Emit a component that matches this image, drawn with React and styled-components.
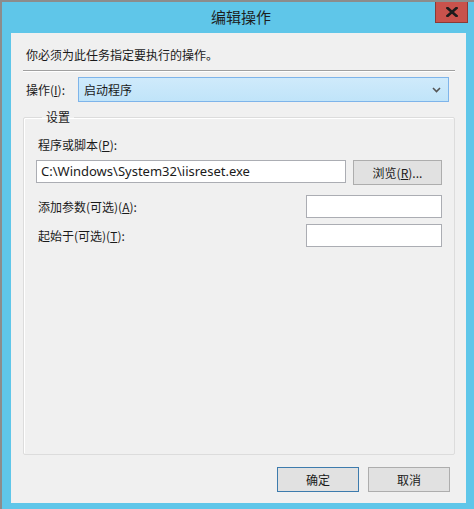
import React from "react";
import styled, { createGlobalStyle } from "styled-components";

const GlobalStyle = createGlobalStyle`
	html, body {
		margin: 0;
		padding: 0;
		background: #f0f0f0;
	}
	body {
		font-family: "Microsoft YaHei", "Noto Sans CJK SC", "Noto Sans", sans-serif;
		font-size: 12px;
		color: #1a1a1a;
	}
`;

function App() {
	return (
		<>
			<GlobalStyle />
			<Window>
				<TitleBar>
					<Title>编辑操作</Title>
					<CloseButton aria-label="close">
						<svg width="12" height="10" viewBox="0 0 12 10">
							<path
								d="M1.5 1 L10.5 9 M10.5 1 L1.5 9"
								stroke="#1c1c1c"
								strokeWidth="2.6"
								strokeLinecap="square"
							/>
						</svg>
					</CloseButton>
				</TitleBar>

				<Client>
					<Hint>你必须为此任务指定要执行的操作。</Hint>
					<Separator />

					<ActionRow>
						<Label>
							操作(<U>I</U>):
						</Label>
						<Combo>
							<span>启动程序</span>
							<svg width="9" height="6" viewBox="0 0 9 6">
								<path
									d="M1 1 L4.5 4.5 L8 1"
									fill="none"
									stroke="#555"
									strokeWidth="1.6"
								/>
							</svg>
						</Combo>
					</ActionRow>

					<Group>
						<Legend>设置</Legend>
						<FieldLabel>
							程序或脚本(<U>P</U>):
						</FieldLabel>
						<ProgramRow>
							<TextBox $width="310px">C:\Windows\System32\iisreset.exe</TextBox>
							<Button $width="89px" $height="25px">
								浏览(<U>R</U>)...
							</Button>
						</ProgramRow>
						<OptionRow>
							<Label>
								添加参数(可选)(<U>A</U>):
							</Label>
							<TextBox $width="136px" />
						</OptionRow>
						<OptionRow>
							<Label>
								起始于(可选)(<U>T</U>):
							</Label>
							<TextBox $width="136px" />
						</OptionRow>
					</Group>

					<Footer>
						<Button $width="82px" $height="25px" $primary>
							确定
						</Button>
						<Button $width="82px" $height="25px">
							取消
						</Button>
					</Footer>
				</Client>
			</Window>
		</>
	);
}

export default App;

const Window = styled.div`
	width: 474px;
	height: 509px;
	box-sizing: border-box;
	background: #5fc6e9;
	border-top: 2px solid #8c8c8c;
	border-left: 2px solid #8c8c8c;
	display: flex;
	flex-direction: column;
`;

const TitleBar = styled.div`
	height: 31px;
	display: flex;
	align-items: flex-start;
	justify-content: center;
	position: relative;
`;

const Title = styled.div`
	font-size: 15px;
	line-height: 30px;
	color: #1e1e1e;
	padding-left: 6px;
`;

const CloseButton = styled.div`
	position: absolute;
	right: 6px;
	top: 0;
	width: 33px;
	height: 21px;
	box-sizing: border-box;
	background: #c8524c;
	border: 1px solid #8a3a36;
	border-top: none;
	display: flex;
	align-items: center;
	justify-content: center;
`;

const Client = styled.div`
	flex: 1;
	margin: 0 8px 6px 9px;
	background: #f0f0f0;
	padding: 0 11px 0 12px;
	display: flex;
	flex-direction: column;
`;

const Hint = styled.div`
	padding: 13px 0 0 3px;
	height: 24px;
	line-height: 18px;
`;

const Separator = styled.div`
	height: 1px;
	background: #a0a0a0;
	border-bottom: 1px solid #ffffff;
`;

const ActionRow = styled.div`
	display: flex;
	align-items: center;
	margin-top: 5px;
	padding: 0 6px 0 3px;
`;

const Label = styled.div`
	flex: 1;
	white-space: nowrap;
`;

const U = styled.span`
	text-decoration: underline;
`;

const Combo = styled.div`
	width: 371px;
	height: 25px;
	box-sizing: border-box;
	flex: none;
	border: 1px solid #7eb4ea;
	background: linear-gradient(#cfeafb, #c0e4f9);
	display: flex;
	align-items: center;
	justify-content: space-between;
	padding: 0 7px 0 5px;
`;

const Group = styled.fieldset`
	margin: 8px 0 0 0;
	padding: 13px 12px 0 12px;
	height: 345px;
	box-sizing: border-box;
	border: 1px solid #dcdcdc;
	box-shadow: inset 1px 1px 0 #ffffff;
	border-radius: 2px;
	display: flex;
	flex-direction: column;
`;

const Legend = styled.legend`
	padding: 0 4px;
	margin-left: 6px;
	line-height: 14px;
`;

const FieldLabel = styled.div`
	padding-left: 2px;
	line-height: 16px;
`;

const ProgramRow = styled.div`
	display: flex;
	align-items: flex-start;
	gap: 7px;
	margin-top: 7px;
`;

const TextBox = styled.div`
	width: ${(p) => p.$width};
	height: 23px;
	box-sizing: border-box;
	flex: none;
	background: #ffffff;
	border: 1px solid #abadb3;
	padding: 0 4px;
	line-height: 21px;
	font-family: "Segoe UI", "Noto Sans", "Noto Sans CJK SC", sans-serif;
	font-size: 13px;
	white-space: nowrap;
`;

const Button = styled.div`
	width: ${(p) => p.$width};
	height: ${(p) => p.$height};
	box-sizing: border-box;
	flex: none;
	display: flex;
	align-items: center;
	justify-content: center;
	background: #e1e1e1;
	border: 1px solid ${(p) => (p.$primary ? "#3d7bad" : "#adadad")};
	color: #1a1a1a;
`;

const OptionRow = styled.div`
	display: flex;
	align-items: center;
	margin-top: 10px;
	padding-left: 2px;
	& + & {
		margin-top: 6px;
	}
`;

const Footer = styled.div`
	display: flex;
	justify-content: flex-end;
	gap: 9px;
	margin-top: 12px;
	padding-right: 5px;
`;
